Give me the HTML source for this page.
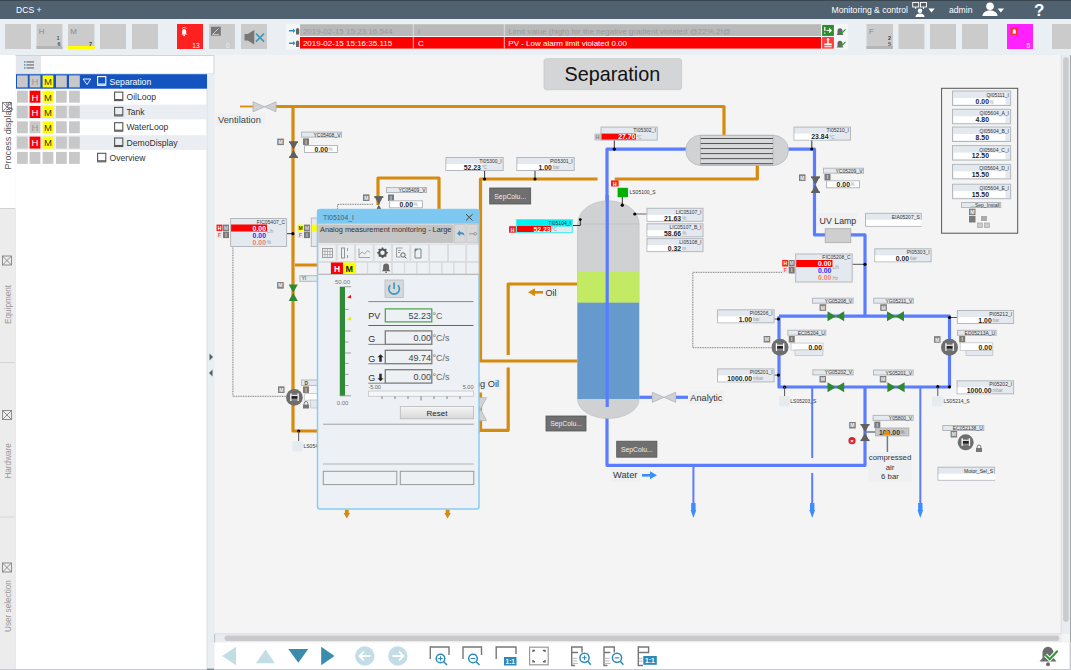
<!DOCTYPE html>
<html><head><meta charset="utf-8">
<style>
*{margin:0;padding:0;box-sizing:border-box}
html,body{width:1071px;height:670px;overflow:hidden;background:#f4f4f4;font-family:"Liberation Sans",sans-serif;position:relative}
svg{position:absolute;left:0;top:0}
svg text{font-family:"Liberation Sans",sans-serif}
</style></head><body>
<svg width="1071" height="670" viewBox="0 0 1071 670">
<!-- canvas bg -->
<rect x="214" y="55" width="857" height="615" fill="#f4f4f4"/>
<!-- canvas chrome -->
<rect x="213.6" y="55" width="1" height="580" fill="#dedede"/>
<rect x="544" y="58.7" width="137.6" height="31" rx="2.5" fill="#d4d5d6" stroke="#c4c6c8" stroke-width="0.8"/>
<text x="612.3" y="81.4" font-size="19.8" fill="#111" text-anchor="middle">Separation</text>
<!-- scrollbars -->
<rect x="1061" y="55" width="10" height="579" fill="#e8ecf0"/>
<line x1="1061.2" y1="55" x2="1061.2" y2="634" stroke="#d8dcdf" stroke-width="0.8"/>
<rect x="1063.1" y="57.2" width="5.6" height="564.7" rx="2.8" fill="#cbcbcb"/>
<rect x="214.5" y="633.5" width="847" height="9" fill="#e8ecf0"/>
<line x1="214.5" y1="633.7" x2="1061" y2="633.7" stroke="#d8dcdf" stroke-width="0.8"/>
<rect x="224.6" y="635.5" width="834.6" height="5.4" rx="2.7" fill="#c9c9c9"/>
<rect x="1070" y="55" width="1" height="615" fill="#a0a5aa"/>
<rect x="214.5" y="642.5" width="856" height="27.5" fill="#fff"/>


<!-- nav buttons -->
<polygon points="236,646.8 236,665.3 222.2,656" fill="#c3dde6"/>
<polygon points="255.9,663.3 275,663.3 265.5,649.5" fill="#c3dde6"/>
<polygon points="288.3,649 308.3,649 298.3,662.7" fill="#3a8cad"/>
<polygon points="321.2,646.8 321.2,665.3 334.5,656" fill="#3a8cad"/>
<circle cx="364.8" cy="656" r="9.7" fill="#c3dde6"/>
<path d="M359.5,656 h11 M364,651.5 l-4.5,4.5 l4.5,4.5" fill="none" stroke="#fff" stroke-width="1.8"/>
<circle cx="397.8" cy="656" r="9.7" fill="#c3dde6"/>
<path d="M392.5,656 h11 M399,651.5 l4.5,4.5 l-4.5,4.5" fill="none" stroke="#fff" stroke-width="1.8"/>
<g fill="none" stroke="#777" stroke-width="1.4">
<path d="M430.3,659 V647 H449 V655"/>
<path d="M463,659 V647 H481.5 V655"/>
<path d="M496.2,659 V647 H516 V654"/>
<rect x="529.6" y="647.2" width="18.6" height="17.6" stroke="#999" stroke-width="1.2"/>
<path d="M533,652 V650.5 H535 M543,650.5 H545 V652 M545,660 V661.8 H543 M535,661.8 H533 V660" stroke="#666"/>
<path d="M575,665.5 H571.7 V647 H582 V652.5 M571.7,652.5 H578"/>
<path d="M607.4,665.5 H604 V647 H614.3 V652.5 M604,652.5 H610.3"/>
<path d="M643,665.5 H638.3 V647 H648.6 V652.5 H638.3"/>
</g>
<g stroke="#bbb" stroke-width="1">
<path d="M572,658.3 h5 M572,661 h5 M572,663.5 h6"/>
<path d="M604.5,658.3 h5 M604.5,661 h5 M604.5,663.5 h6"/>
<path d="M638.8,658.3 h4 M638.8,661 h4"/>
</g>
<g fill="none" stroke="#2c89b8" stroke-width="1.5">
<circle cx="440.5" cy="658.5" r="4.3"/><line x1="443.7" y1="661.7" x2="447" y2="665"/>
<circle cx="473" cy="658.5" r="4.3"/><line x1="476.2" y1="661.7" x2="479.5" y2="665"/>
<circle cx="584.5" cy="657.8" r="4.6"/><line x1="587.8" y1="661.2" x2="590.8" y2="664.8"/>
<circle cx="617" cy="657.8" r="4.6"/><line x1="620.3" y1="661.2" x2="623.3" y2="664.8"/>
</g>
<g stroke="#2c89b8" stroke-width="1.1">
<path d="M438.2,658.5 h4.6 M440.5,656.2 v4.6"/><path d="M470.7,658.5 h4.6"/>
<path d="M582.2,657.8 h4.6 M584.5,655.5 v4.6"/><path d="M614.7,657.8 h4.6"/>
</g>
<rect x="504" y="657" width="12.5" height="8.5" fill="#2c89b8"/>
<text x="510.3" y="664" font-size="6.5" fill="#fff" text-anchor="middle" font-weight="bold">1:1</text>
<rect x="643.3" y="656" width="13.5" height="8.8" fill="#2c89b8"/>
<text x="650" y="663.3" font-size="6.8" fill="#fff" text-anchor="middle" font-weight="bold">1:1</text>
<!-- bell check -->
<path d="M1039.5,661.5 h17 l-3,-3.5 v-5 a5.5,6.2 0 0 0 -11,0 v5 z" fill="#6b6b6b"/>
<circle cx="1048" cy="664.2" r="2" fill="#6b6b6b"/>
<path d="M1045.5,655 l4.2,4.2 l8,-8.5" fill="none" stroke="#fff" stroke-width="4"/>
<path d="M1045.5,655 l4.2,4.2 l8,-8.5" fill="none" stroke="#2a9a2a" stroke-width="2"/>
<rect x="1069.6" y="642" width="1.4" height="28" fill="#c8ccd0"/>
<polyline points="240,106.5 253,106.5" fill="none" stroke="#d68a0e" stroke-width="1.8" stroke-linejoin="round" />
<polyline points="276,106.5 724,106.5 724,135" fill="none" stroke="#d68a0e" stroke-width="3.2" stroke-linejoin="round" />
<polyline points="293,106.5 293,431 480,431" fill="none" stroke="#d68a0e" stroke-width="3.2" stroke-linejoin="round" />
<polyline points="295,265 330,265" fill="none" stroke="#d68a0e" stroke-width="3.2" stroke-linejoin="round" />
<polyline points="378,205 378,178 439,178 439,215" fill="none" stroke="#d68a0e" stroke-width="3.2" stroke-linejoin="round" />
<polyline points="480.5,235 480.5,179 597.5,179" fill="none" stroke="#d68a0e" stroke-width="3.2" stroke-linejoin="round" />
<polyline points="614.8,179 757.3,179 757.3,165" fill="none" stroke="#d68a0e" stroke-width="3.2" stroke-linejoin="round" />
<polyline points="480.5,235 480.5,361 577.5,361" fill="none" stroke="#d68a0e" stroke-width="3.2" stroke-linejoin="round" />
<polyline points="577.5,284 508.2,284 508.2,355" fill="none" stroke="#d68a0e" stroke-width="3.2" stroke-linejoin="round" />
<polyline points="508.2,367.5 508.2,430.3 480.5,430.3 480.5,392.4" fill="none" stroke="#d68a0e" stroke-width="3.2" stroke-linejoin="round" />
<polygon points="474.5,397.7 486.5,397.7 480.5,409.2 486.5,420.6 474.5,420.6 480.5,409.2" fill="#d0d2d4" stroke="#b0b3b5" stroke-width="0.8"/>
<rect x="478" y="379" width="24" height="11" fill="#eef0f2" stroke="none" stroke-width="1" rx="0" />
<rect x="344.90000000000003" y="509.5" width="3.8" height="5" fill="#d68a0e" stroke="none" stroke-width="1" rx="0" />
<polygon points="343.6,513.0 350.0,513.0 346.8,518.5" fill="#d68a0e"/>
<rect x="445.70000000000005" y="509.5" width="3.8" height="5" fill="#d68a0e" stroke="none" stroke-width="1" rx="0" />
<polygon points="444.40000000000003,513.0 450.8,513.0 447.6,518.5" fill="#d68a0e"/>
<rect x="533" y="291" width="10" height="2.6" fill="#d68a0e" stroke="none" stroke-width="1" rx="0" />
<polygon points="528,292.3 535,288.3 535,296.3" fill="#d68a0e"/>
<polyline points="686,149.2 607,149.2 607,407" fill="none" stroke="#5a7dff" stroke-width="3.2" stroke-linejoin="round" />
<polyline points="607,418 607,465.3 865,465.3 865,387" fill="none" stroke="#5a7dff" stroke-width="3.2" stroke-linejoin="round" />
<polyline points="788,149.2 814.5,149.2 814.5,234.8 825,234.8" fill="none" stroke="#5a7dff" stroke-width="3.2" stroke-linejoin="round" />
<polyline points="851,234.8 865,234.8 865,316.2" fill="none" stroke="#5a7dff" stroke-width="3.2" stroke-linejoin="round" />
<polyline points="779,316.2 949.5,316.2 949.5,387 779,387 779,316.2" fill="none" stroke="#5a7dff" stroke-width="3.2" stroke-linejoin="round" />
<polyline points="639,397.3 652,397.3" fill="none" stroke="#5a7dff" stroke-width="3.2" stroke-linejoin="round" />
<polyline points="676,397.3 688,397.3" fill="none" stroke="#5a7dff" stroke-width="3.2" stroke-linejoin="round" />
<line x1="693.4" y1="465" x2="693.4" y2="505" stroke="#5a7dff" stroke-width="2" />
<line x1="812.2" y1="387" x2="812.2" y2="458" stroke="#5a7dff" stroke-width="2" />
<line x1="812.2" y1="473" x2="812.2" y2="505" stroke="#5a7dff" stroke-width="2" />
<line x1="920.3" y1="387" x2="920.3" y2="505" stroke="#5a7dff" stroke-width="2" />
<rect x="691.1999999999999" y="503" width="4.4" height="8" fill="#3d8cff" stroke="none" stroke-width="1" rx="0" />
<polygon points="690.6,510 696.1999999999999,510 693.4,518" fill="#3d8cff"/>
<rect x="810.0" y="503" width="4.4" height="8" fill="#3d8cff" stroke="none" stroke-width="1" rx="0" />
<polygon points="809.4000000000001,510 815.0,510 812.2,518" fill="#3d8cff"/>
<rect x="918.0999999999999" y="503" width="4.4" height="8" fill="#3d8cff" stroke="none" stroke-width="1" rx="0" />
<polygon points="917.5,510 923.0999999999999,510 920.3,518" fill="#3d8cff"/>
<rect x="642" y="474" width="10" height="2.6" fill="#3d8cff" stroke="none" stroke-width="1" rx="0" />
<polygon points="657,475.3 650,471.3 650,479.3" fill="#3d8cff"/>
<polyline points="232.9,246.5 232.9,396.3 286,396.3" fill="none" stroke="#7a7a7a" stroke-width="1" stroke-linejoin="round" stroke-dasharray="1,0.7"/>
<polyline points="373,204.3 337.5,204.3 337.5,215" fill="none" stroke="#7a7a7a" stroke-width="1" stroke-linejoin="round" stroke-dasharray="1,0.7"/>
<polyline points="782,272.3 692.8,272.3 692.8,347.7 771,347.7" fill="none" stroke="#7a7a7a" stroke-width="1" stroke-linejoin="round" stroke-dasharray="1,0.7"/>
<polyline points="600,348 771,348" fill="none" stroke="#888" stroke-width="0" stroke-linejoin="round" stroke-dasharray="1,0.7"/>
<polygon points="253,101.8 264.5,106.8 253,111.8" fill="#cfd2d4" stroke="#b0b3b5" stroke-width="0.8"/>
<polygon points="276,101.8 264.5,106.8 276,111.8" fill="#cfd2d4" stroke="#b0b3b5" stroke-width="0.8"/>
<rect x="215" y="113" width="50" height="13" fill="#eef0f2" stroke="none" stroke-width="1" rx="0" />
<text x="218" y="122.7" font-size="9.3" fill="#444" text-anchor="start" font-weight="normal" >Ventilation</text>
<polygon points="289.0,141.5 298.0,141.5 293.5,149.75 298.0,158 289.0,158 293.5,149.75" fill="#606060"/>
<rect x="289.0" y="141.5" width="9" height="1.5" fill="#606060" stroke="none" stroke-width="1" rx="0" />
<rect x="289.0" y="156.5" width="9" height="1.5" fill="#606060" stroke="none" stroke-width="1" rx="0" />
<rect x="277.8" y="139.1" width="5.5" height="5.5" fill="#8c8c8c" stroke="#7a7a7a" stroke-width="1" rx="0" />
<text x="280.55" y="143.9" font-size="5" fill="#f2f2f2" text-anchor="middle" font-weight="bold" >M</text>
<rect x="301.5" y="132.1" width="40" height="5" fill="#e3e9ef" stroke="#b4b8bc" stroke-width="1" rx="0" />
<text x="340.5" y="136.6" font-size="5" fill="#333" text-anchor="end" font-weight="normal" >YC05408_V</text>
<rect x="303" y="138.4" width="6" height="6.5" fill="#7a7a7a" stroke="none" stroke-width="1" rx="0" />
<text x="306.0" y="143.70000000000002" font-size="5" fill="#ddd" text-anchor="middle" font-weight="bold" >I</text>
<rect x="304.5" y="145.5" width="33" height="7" fill="#fff" stroke="#b4b8bc" stroke-width="1"/>
<text transform="translate(328,151.8) scale(0.86,1)" font-size="8" fill="#222" text-anchor="end" font-weight="bold" >0.00</text>
<text x="328.5" y="151" font-size="4.5" fill="#999" text-anchor="start" font-weight="normal" >%</text>
<polygon points="374.3,196.3 383.3,196.3 378.8,204.65 383.3,213 374.3,213 378.8,204.65" fill="#606060"/>
<rect x="374.3" y="196.3" width="9" height="1.5" fill="#606060" stroke="none" stroke-width="1" rx="0" />
<rect x="374.3" y="211.5" width="9" height="1.5" fill="#606060" stroke="none" stroke-width="1" rx="0" />
<rect x="363.5" y="194.9" width="5.5" height="5.5" fill="#8c8c8c" stroke="#7a7a7a" stroke-width="1" rx="0" />
<text x="366.25" y="199.70000000000002" font-size="5" fill="#f2f2f2" text-anchor="middle" font-weight="bold" >M</text>
<rect x="386.5" y="187.5" width="40" height="5" fill="#e3e9ef" stroke="#b4b8bc" stroke-width="1" rx="0" />
<text x="425.5" y="192" font-size="5" fill="#333" text-anchor="end" font-weight="normal" >YC05409_V</text>
<rect x="388" y="194.5" width="6" height="6.5" fill="#7a7a7a" stroke="none" stroke-width="1" rx="0" />
<text x="391.0" y="199.8" font-size="5" fill="#ddd" text-anchor="middle" font-weight="bold" >I</text>
<rect x="389.5" y="200.8" width="33" height="7" fill="#fff" stroke="#b4b8bc" stroke-width="1"/>
<text transform="translate(413,207) scale(0.86,1)" font-size="8" fill="#222" text-anchor="end" font-weight="bold" >0.00</text>
<text x="413.5" y="206.2" font-size="4.5" fill="#999" text-anchor="start" font-weight="normal" >%</text>
<rect x="445.9" y="157.5" width="57.3" height="13" fill="#e3e9ef" stroke="#b4b8bc" stroke-width="1" rx="0" />
<rect x="446.4" y="164.0" width="34.98" height="6.0" fill="#fff" stroke="none" stroke-width="1" rx="0" />
<text x="501.7" y="162.8" font-size="5" fill="#333" text-anchor="end" font-weight="normal" >TI05300_I</text>
<text transform="translate(480.88,169.7) scale(0.86,1)" font-size="8" fill="#222" text-anchor="end" font-weight="bold" >52.23</text>
<text x="481.88" y="169" font-size="4.5" fill="#999" text-anchor="start" font-weight="normal" >°C</text>
<line x1="484.6" y1="171" x2="484.6" y2="179" stroke="#333" stroke-width="1" />
<circle cx="484.6" cy="179" r="1.6" fill="#000"/>
<rect x="516.9" y="157.5" width="57.3" height="13" fill="#e3e9ef" stroke="#b4b8bc" stroke-width="1" rx="0" />
<rect x="517.4" y="164.0" width="34.98" height="6.0" fill="#fff" stroke="none" stroke-width="1" rx="0" />
<text x="572.6999999999999" y="162.8" font-size="5" fill="#333" text-anchor="end" font-weight="normal" >PI05301_I</text>
<text transform="translate(551.88,169.7) scale(0.86,1)" font-size="8" fill="#222" text-anchor="end" font-weight="bold" >1.00</text>
<text x="552.88" y="169" font-size="4.5" fill="#999" text-anchor="start" font-weight="normal" >bar</text>
<line x1="535" y1="171" x2="535" y2="179" stroke="#333" stroke-width="1" />
<circle cx="535" cy="179" r="1.6" fill="#000"/>
<rect x="489.7" y="188" width="41" height="16" fill="#6f6f6f" stroke="#555" stroke-width="0.8" rx="0" />
<text x="510.2" y="198.5" font-size="6.8" fill="#eee" text-anchor="middle" font-weight="normal" >SepColu...</text>
<rect x="594.3" y="133.5" width="6.7" height="7" fill="#c8c8c8" stroke="none" stroke-width="1" rx="0" />
<text x="597.6" y="139" font-size="5" fill="#888" text-anchor="middle" font-weight="bold" >H</text>
<rect x="601.0" y="127.1" width="56.3" height="13" fill="#e3e9ef" stroke="#b4b8bc" stroke-width="1" rx="0" />
<rect x="601.5" y="133.6" width="34.379999999999995" height="6.0" fill="#ff0000" stroke="none" stroke-width="1" rx="0" />
<text x="655.8" y="132.4" font-size="5" fill="#333" text-anchor="end" font-weight="normal" >TI05302_I</text>
<text transform="translate(635.38,139.29999999999998) scale(0.86,1)" font-size="8" fill="#fff" text-anchor="end" font-weight="bold" >27.70</text>
<text x="636.38" y="138.6" font-size="4.5" fill="#999" text-anchor="start" font-weight="normal" >°C</text>
<line x1="614.3" y1="140.6" x2="614.3" y2="149" stroke="#333" stroke-width="1" />
<circle cx="614.3" cy="149.2" r="1.6" fill="#000"/>
<rect x="509" y="226.2" width="7" height="6.5" fill="#ff1a1a" stroke="none" stroke-width="1" rx="0" />
<text x="512.5" y="231.5" font-size="5" fill="#fff" text-anchor="middle" font-weight="bold" >H</text>
<rect x="516.4" y="219.5" width="56" height="13" fill="#e3e9ef" stroke="#b4b8bc" stroke-width="1" rx="0" />
<rect x="516.4" y="219.5" width="56" height="7.0" fill="#00f0f0" stroke="none" stroke-width="1" rx="0" />
<rect x="516.9" y="226.0" width="34.199999999999996" height="6.0" fill="#ff0000" stroke="none" stroke-width="1" rx="0" />
<text x="570.9" y="224.8" font-size="5" fill="#333" text-anchor="end" font-weight="normal" >TI05104_I</text>
<text transform="translate(550.6,231.7) scale(0.86,1)" font-size="8" fill="#fff" text-anchor="end" font-weight="bold" >52.23</text>
<text x="551.6" y="231" font-size="4.5" fill="#999" text-anchor="start" font-weight="normal" >°C</text>
<rect x="516.4" y="219.5" width="56" height="13" fill="none" stroke="#5ee" stroke-width="1"/>
<path d="M700.7,135.2 L773,135.2 A15.5,15.1 0 0 1 773,165.4 L700.7,165.4 A15,15.1 0 0 1 700.7,135.2 Z" fill="#d0d2d3" stroke="#b8babb" stroke-width="0.8"/>
<rect x="700.7" y="135.5" width="72.3" height="29.6" fill="#d7d9da" stroke="#aaa" stroke-width="0.6" rx="0" />
<line x1="700.7" y1="138.5" x2="773" y2="138.5" stroke="#444" stroke-width="0.9" />
<line x1="700.7" y1="143.53" x2="773" y2="143.53" stroke="#444" stroke-width="0.9" />
<line x1="700.7" y1="148.56" x2="773" y2="148.56" stroke="#444" stroke-width="0.9" />
<line x1="700.7" y1="153.59" x2="773" y2="153.59" stroke="#444" stroke-width="0.9" />
<line x1="700.7" y1="158.62" x2="773" y2="158.62" stroke="#444" stroke-width="0.9" />
<line x1="700.7" y1="163.65" x2="773" y2="163.65" stroke="#444" stroke-width="0.9" />
<rect x="794.0" y="127.1" width="56.5" height="13" fill="#e3e9ef" stroke="#b4b8bc" stroke-width="1" rx="0" />
<rect x="794.5" y="133.6" width="34.5" height="6.0" fill="#fff" stroke="none" stroke-width="1" rx="0" />
<text x="849.0" y="132.4" font-size="5" fill="#333" text-anchor="end" font-weight="normal" >TI05210_I</text>
<text transform="translate(828.5,139.29999999999998) scale(0.86,1)" font-size="8" fill="#222" text-anchor="end" font-weight="bold" >23.84</text>
<text x="829.5" y="138.6" font-size="4.5" fill="#999" text-anchor="start" font-weight="normal" >°C</text>
<line x1="811.8" y1="140.6" x2="811.8" y2="148" stroke="#333" stroke-width="1" />
<circle cx="811.8" cy="149" r="1.6" fill="#000"/>
<polygon points="811.0,176.6 820.0,176.6 815.5,184.8 820.0,193 811.0,193 815.5,184.8" fill="#606060"/>
<rect x="811.0" y="176.6" width="9" height="1.5" fill="#606060" stroke="none" stroke-width="1" rx="0" />
<rect x="811.0" y="191.5" width="9" height="1.5" fill="#606060" stroke="none" stroke-width="1" rx="0" />
<rect x="799.5" y="174.9" width="5.5" height="5.5" fill="#8c8c8c" stroke="#7a7a7a" stroke-width="1" rx="0" />
<text x="802.25" y="179.70000000000002" font-size="5" fill="#f2f2f2" text-anchor="middle" font-weight="bold" >M</text>
<rect x="823.5" y="168.2" width="40" height="5" fill="#e3e9ef" stroke="#b4b8bc" stroke-width="1" rx="0" />
<text x="862.5" y="172.7" font-size="5" fill="#333" text-anchor="end" font-weight="normal" >YC05209_V</text>
<rect x="824.5" y="174" width="6" height="6.5" fill="#7a7a7a" stroke="none" stroke-width="1" rx="0" />
<text x="827.5" y="179.3" font-size="5" fill="#ddd" text-anchor="middle" font-weight="bold" >I</text>
<rect x="826.5" y="180.8" width="33" height="7" fill="#fff" stroke="#b4b8bc" stroke-width="1"/>
<text transform="translate(850,187) scale(0.86,1)" font-size="8" fill="#222" text-anchor="end" font-weight="bold" >0.00</text>
<text x="850.5" y="186.2" font-size="4.5" fill="#999" text-anchor="start" font-weight="normal" >%</text>
<path d="M577.5,224 A30.8,23.2 0 0 1 639.1,224 L639.1,399 A30.8,19.5 0 0 1 577.5,399 Z" fill="#d0d1d2" stroke="#bbb" stroke-width="0.6"/>
<rect x="577.5" y="272" width="61.6" height="30.7" fill="#c2ea62" stroke="none" stroke-width="1" rx="0" />
<rect x="577.5" y="302.7" width="61.6" height="96.3" fill="#6699cc" stroke="none" stroke-width="1" rx="0" />
<line x1="577.5" y1="224" x2="639.1" y2="224" stroke="#bbb" stroke-width="0.6" />
<line x1="607.2" y1="195" x2="607.2" y2="407" stroke="#5a7dff" stroke-width="3.2" />
<polyline points="573,225.5 580.3,225.5 580.3,219.6" fill="none" stroke="#333" stroke-width="1" stroke-linejoin="round" />
<circle cx="580.3" cy="219.6" r="1.4" fill="#000"/>
<rect x="611" y="180.4" width="7.6" height="6.1" fill="#ff1a1a" stroke="none" stroke-width="1" rx="0" />
<text x="614.8" y="185.6" font-size="5" fill="#fff" text-anchor="middle" font-weight="bold" >H</text>
<rect x="617.6" y="187.8" width="10.4" height="9.4" fill="#00b000" stroke="none" stroke-width="1" rx="0" />
<text x="629.5" y="193.5" font-size="5" fill="#333" text-anchor="start" font-weight="normal" >LS05100_S</text>
<line x1="622.3" y1="197" x2="622.3" y2="205" stroke="#333" stroke-width="1" />
<circle cx="622.3" cy="205.2" r="1.6" fill="#000"/>
<polyline points="634.8,214 646.6,214" fill="none" stroke="#666" stroke-width="1" stroke-linejoin="round" />
<circle cx="634.8" cy="214" r="1.6" fill="#000"/>
<rect x="647.0" y="208.3" width="56" height="13" fill="#e3e9ef" stroke="#b4b8bc" stroke-width="1" rx="0" />
<rect x="647.5" y="214.8" width="34.199999999999996" height="6.0" fill="#fff" stroke="none" stroke-width="1" rx="0" />
<text x="701.5" y="213.60000000000002" font-size="5" fill="#333" text-anchor="end" font-weight="normal" >LIC05107_I</text>
<text transform="translate(681.2,220.5) scale(0.86,1)" font-size="8" fill="#222" text-anchor="end" font-weight="bold" >21.63</text>
<text x="682.2" y="219.8" font-size="4.5" fill="#999" text-anchor="start" font-weight="normal" >%</text>
<rect x="647.0" y="223.8" width="56" height="13" fill="#e3e9ef" stroke="#b4b8bc" stroke-width="1" rx="0" />
<rect x="647.5" y="230.3" width="34.199999999999996" height="6.0" fill="#fff" stroke="none" stroke-width="1" rx="0" />
<text x="701.5" y="229.10000000000002" font-size="5" fill="#333" text-anchor="end" font-weight="normal" >LIC05107_B_I</text>
<text transform="translate(681.2,236.0) scale(0.86,1)" font-size="8" fill="#222" text-anchor="end" font-weight="bold" >58.66</text>
<text x="682.2" y="235.3" font-size="4.5" fill="#999" text-anchor="start" font-weight="normal" >%</text>
<rect x="647.0" y="238.6" width="56" height="13" fill="#e3e9ef" stroke="#b4b8bc" stroke-width="1" rx="0" />
<rect x="647.5" y="245.1" width="34.199999999999996" height="6.0" fill="#fff" stroke="none" stroke-width="1" rx="0" />
<text x="701.5" y="243.9" font-size="5" fill="#333" text-anchor="end" font-weight="normal" >LI05108_I</text>
<text transform="translate(681.2,250.79999999999998) scale(0.86,1)" font-size="8" fill="#222" text-anchor="end" font-weight="bold" >0.32</text>
<text x="682.2" y="250.1" font-size="4.5" fill="#999" text-anchor="start" font-weight="normal" >m</text>
<rect x="546" y="416" width="40" height="15" fill="#6f6f6f" stroke="#555" stroke-width="0.8" rx="0" />
<text x="566.0" y="426.0" font-size="6.8" fill="#eee" text-anchor="middle" font-weight="normal" >SepColu...</text>
<rect x="544" y="287" width="15" height="12" fill="#eef0f2" stroke="none" stroke-width="1" rx="0" />
<text x="545.4" y="296" font-size="9" fill="#333" text-anchor="start" font-weight="normal" >Oil</text>
<text x="499.2" y="386.9" font-size="9.3" fill="#333" text-anchor="end" font-weight="normal" >ng Oil</text>
<polygon points="652.3,392.3 664.0,397.3 652.3,402.3" fill="#cfd2d4" stroke="#b0b3b5" stroke-width="0.8"/>
<polygon points="675.7,392.3 664.0,397.3 675.7,402.3" fill="#cfd2d4" stroke="#b0b3b5" stroke-width="0.8"/>
<rect x="688" y="391" width="36" height="13" fill="#eef0f2" stroke="none" stroke-width="1" rx="0" />
<text x="690.3" y="401" font-size="9.2" fill="#333" text-anchor="start" font-weight="normal" >Analytic</text>
<rect x="616.7" y="441.2" width="40.2" height="16" fill="#6f6f6f" stroke="#555" stroke-width="0.8" rx="0" />
<text x="636.8000000000001" y="451.7" font-size="6.8" fill="#eee" text-anchor="middle" font-weight="normal" >SepColu...</text>
<rect x="611" y="469" width="29" height="13" fill="#eef0f2" stroke="none" stroke-width="1" rx="0" />
<text x="613" y="478.2" font-size="9.3" fill="#333" text-anchor="start" font-weight="normal" >Water</text>
<rect x="817" y="213" width="40" height="13" fill="#eef0f2" stroke="none" stroke-width="1" rx="0" />
<text x="819.6" y="224" font-size="8.8" fill="#333" text-anchor="start" font-weight="normal" >UV Lamp</text>
<rect x="825.2" y="228.7" width="25.6" height="14" fill="#cfcfcf" stroke="#aaa" stroke-width="0.8" rx="0" />
<rect x="865.5" y="213.3" width="55.8" height="13" fill="#e3e9ef" stroke="#b4b8bc" stroke-width="1" rx="0" />
<rect x="866" y="219.8" width="55.8" height="6.0" fill="#fff" stroke="none" stroke-width="1" rx="0" />
<text x="919.8" y="218.60000000000002" font-size="5" fill="#333" text-anchor="end" font-weight="normal" >EIA05207_S</text>
<rect x="874.8" y="248.8" width="56.3" height="13" fill="#e3e9ef" stroke="#b4b8bc" stroke-width="1" rx="0" />
<rect x="875.3" y="255.3" width="34.379999999999995" height="6.0" fill="#fff" stroke="none" stroke-width="1" rx="0" />
<text x="929.5999999999999" y="254.10000000000002" font-size="5" fill="#333" text-anchor="end" font-weight="normal" >PI05303_I</text>
<text transform="translate(909.18,261.0) scale(0.86,1)" font-size="8" fill="#222" text-anchor="end" font-weight="bold" >0.00</text>
<text x="910.18" y="260.3" font-size="4.5" fill="#999" text-anchor="start" font-weight="normal" >bar</text>
<rect x="782.2" y="260" width="6" height="6.5" fill="#ff1a1a" stroke="none" stroke-width="1" rx="0" />
<text x="785.2" y="265.3" font-size="5" fill="#fff" text-anchor="middle" font-weight="bold" >H</text>
<rect x="788.7" y="260" width="6" height="6.5" fill="#7a7a7a" stroke="none" stroke-width="1" rx="0" />
<text x="791.7" y="265.3" font-size="5" fill="#ddd" text-anchor="middle" font-weight="bold" >M</text>
<rect x="782.2" y="267" width="6" height="6.5" fill="#e8e8e8" stroke="none" stroke-width="1" rx="0" />
<text x="785.2" y="272.3" font-size="5" fill="#ff5050" text-anchor="middle" font-weight="bold" >F</text>
<rect x="788.7" y="267" width="6" height="6.5" fill="#7a7a7a" stroke="none" stroke-width="1" rx="0" />
<text x="791.7" y="272.3" font-size="5" fill="#ddd" text-anchor="middle" font-weight="bold" >I</text>
<rect x="795.7" y="254.0" width="56.5" height="28" fill="#e3e9ef" stroke="#b4b8bc" stroke-width="1" rx="0" />
<text x="850.7" y="259.3" font-size="5" fill="#333" text-anchor="end" font-weight="normal" >FIC05208_C</text>
<rect x="796.2" y="260.0" width="36.225" height="7" fill="#ff0000" stroke="none" stroke-width="1" rx="0" />
<text transform="translate(831.4250000000001,266.0) scale(0.86,1)" font-size="8" fill="#fff" text-anchor="end" font-weight="bold" >0.00</text>
<text transform="translate(831.4250000000001,273.0) scale(0.86,1)" font-size="8" fill="#2a2aff" text-anchor="end" font-weight="bold" >0.00</text>
<text transform="translate(831.4250000000001,280.0) scale(0.86,1)" font-size="8" fill="#f08070" text-anchor="end" font-weight="bold" >0.00</text>
<text x="832.4250000000001" y="268.5" font-size="4.5" fill="#999" text-anchor="start" font-weight="normal" >L/h</text>
<text x="832.4250000000001" y="279.5" font-size="4.5" fill="#999" text-anchor="start" font-weight="normal" >Hz</text>
<line x1="852.7" y1="264.3" x2="865" y2="264.3" stroke="#555" stroke-width="1" />
<circle cx="865" cy="264.3" r="1.6" fill="#000"/>
<rect x="812.5" y="298.2" width="40.6" height="5" fill="#e3e9ef" stroke="#b4b8bc" stroke-width="1" rx="0" />
<text x="852.1" y="302.7" font-size="5" fill="#333" text-anchor="end" font-weight="normal" >YG05208_V</text>
<rect x="820.1" y="304.8" width="5.5" height="5.5" fill="#8c8c8c" stroke="#7a7a7a" stroke-width="1" rx="0" />
<text x="822.85" y="309.6" font-size="5" fill="#f2f2f2" text-anchor="middle" font-weight="bold" >M</text>
<polygon points="827.5,311.2 835.85,316.2 827.5,321.2" fill="#2f8a2f"/>
<polygon points="844.2,311.2 835.85,316.2 844.2,321.2" fill="#2f8a2f"/>
<rect x="873.7" y="298.2" width="39.7" height="5" fill="#e3e9ef" stroke="#b4b8bc" stroke-width="1" rx="0" />
<text x="912.4000000000001" y="302.7" font-size="5" fill="#333" text-anchor="end" font-weight="normal" >YG05211_V</text>
<rect x="880.8" y="304.8" width="5.5" height="5.5" fill="#8c8c8c" stroke="#7a7a7a" stroke-width="1" rx="0" />
<text x="883.55" y="309.6" font-size="5" fill="#f2f2f2" text-anchor="middle" font-weight="bold" >M</text>
<polygon points="887,311.2 895.5,316.2 887,321.2" fill="#2f8a2f"/>
<polygon points="904,311.2 895.5,316.2 904,321.2" fill="#2f8a2f"/>
<rect x="812.9" y="369.9" width="40.2" height="5" fill="#e3e9ef" stroke="#b4b8bc" stroke-width="1" rx="0" />
<text x="852.1" y="374.4" font-size="5" fill="#333" text-anchor="end" font-weight="normal" >YG05202_V</text>
<rect x="820.0" y="376.5" width="5.5" height="5.5" fill="#8c8c8c" stroke="#7a7a7a" stroke-width="1" rx="0" />
<text x="822.75" y="381.3" font-size="5" fill="#f2f2f2" text-anchor="middle" font-weight="bold" >M</text>
<polygon points="827.5,382.2 835.85,387.2 827.5,392.2" fill="#2f8a2f"/>
<polygon points="844.2,382.2 835.85,387.2 844.2,392.2" fill="#2f8a2f"/>
<rect x="873.5" y="370.0" width="39.7" height="5" fill="#e3e9ef" stroke="#b4b8bc" stroke-width="1" rx="0" />
<text x="912.2" y="374.5" font-size="5" fill="#333" text-anchor="end" font-weight="normal" >YS05201_V</text>
<rect x="880.3" y="376.5" width="5.5" height="5.5" fill="#8c8c8c" stroke="#7a7a7a" stroke-width="1" rx="0" />
<text x="883.05" y="381.3" font-size="5" fill="#f2f2f2" text-anchor="middle" font-weight="bold" >M</text>
<polygon points="887.4,382.2 896.0,387.2 887.4,392.2" fill="#2f8a2f"/>
<polygon points="904.6,382.2 896.0,387.2 904.6,392.2" fill="#2f8a2f"/>
<rect x="717.6" y="309.8" width="56.5" height="13" fill="#e3e9ef" stroke="#b4b8bc" stroke-width="1" rx="0" />
<rect x="718.1" y="316.3" width="34.5" height="6.0" fill="#fff" stroke="none" stroke-width="1" rx="0" />
<text x="772.6" y="315.1" font-size="5" fill="#333" text-anchor="end" font-weight="normal" >PI05206_I</text>
<text transform="translate(752.1,322.0) scale(0.86,1)" font-size="8" fill="#222" text-anchor="end" font-weight="bold" >1.00</text>
<text x="753.1" y="321.3" font-size="4.5" fill="#999" text-anchor="start" font-weight="normal" >bar</text>
<line x1="774.6" y1="319" x2="778.4" y2="319" stroke="#555" stroke-width="1" />
<circle cx="778.4" cy="319" r="1.6" fill="#000"/>
<rect x="717.6" y="368.9" width="56.5" height="13" fill="#e3e9ef" stroke="#b4b8bc" stroke-width="1" rx="0" />
<rect x="718.1" y="375.4" width="34.5" height="6.0" fill="#fff" stroke="none" stroke-width="1" rx="0" />
<text x="772.6" y="374.2" font-size="5" fill="#333" text-anchor="end" font-weight="normal" >PI05201_I</text>
<text transform="translate(752.1,381.09999999999997) scale(0.86,1)" font-size="8" fill="#222" text-anchor="end" font-weight="bold" >1000.00</text>
<text x="753.1" y="380.4" font-size="4.5" fill="#999" text-anchor="start" font-weight="normal" >mbar</text>
<line x1="774.6" y1="375.1" x2="778.4" y2="375.1" stroke="#555" stroke-width="1" />
<circle cx="778.4" cy="375.1" r="1.6" fill="#000"/>
<circle cx="780" cy="347.3" r="8.5" fill="#6e6e6e"/>
<rect x="775.8" y="343.3" width="1.4" height="7.6" fill="#fff" stroke="none" stroke-width="1" rx="0" />
<rect x="783" y="343.3" width="1.4" height="7.6" fill="#fff" stroke="none" stroke-width="1" rx="0" />
<rect x="777.2" y="344.7" width="5.8" height="1.1" fill="#f4f4f4" stroke="none" stroke-width="1" rx="0" />
<rect x="777.2" y="346.1" width="5.8" height="2.6" fill="#1e1e1e" stroke="none" stroke-width="1" rx="0" />
<rect x="777.2" y="348.7" width="5.8" height="1.8" fill="#8a8a8a" stroke="none" stroke-width="1" rx="0" />
<rect x="764.2" y="336.5" width="5.5" height="5.5" fill="#8c8c8c" stroke="#7a7a7a" stroke-width="1" rx="0" />
<text x="766.95" y="341.3" font-size="5" fill="#f2f2f2" text-anchor="middle" font-weight="bold" >M</text>
<rect x="787.9" y="330.2" width="38" height="5" fill="#e3e9ef" stroke="#b4b8bc" stroke-width="1" rx="0" />
<text x="824.9" y="334.7" font-size="5" fill="#333" text-anchor="end" font-weight="normal" >EC05204_U</text>
<rect x="788.8" y="336" width="6" height="6.5" fill="#7a7a7a" stroke="none" stroke-width="1" rx="0" />
<text x="791.8" y="341.3" font-size="5" fill="#ddd" text-anchor="middle" font-weight="bold" >I</text>
<rect x="791" y="343.1" width="32" height="7" fill="#fff" stroke="#c0c4c8" stroke-width="0.8" rx="0" />
<rect x="795" y="350" width="27.9" height="5.5" fill="#e3e9ef" stroke="#c0c4c8" stroke-width="0.8" rx="0" />
<text transform="translate(822,349.6) scale(0.86,1)" font-size="8" fill="#222" text-anchor="end" font-weight="bold" >0.00</text>
<circle cx="784.6" cy="387.2" r="1.6" fill="#000"/>
<line x1="784.6" y1="387" x2="784.6" y2="396" stroke="#555" stroke-width="1" />
<rect x="779" y="396" width="10.9" height="10.4" fill="#e6ebf0" stroke="none" stroke-width="1" rx="0" />
<text x="790.3" y="403" font-size="5" fill="#333" text-anchor="start" font-weight="normal" >LS05203_S</text>
<polygon points="860.5,424 869.5,424 865,432.55 869.5,441.1 860.5,441.1 865,432.55" fill="#606060"/>
<rect x="860.5" y="424" width="9" height="1.5" fill="#606060" stroke="none" stroke-width="1" rx="0" />
<rect x="860.5" y="439.6" width="9" height="1.5" fill="#606060" stroke="none" stroke-width="1" rx="0" />
<rect x="849.7" y="422.5" width="5.5" height="5.5" fill="#8c8c8c" stroke="#7a7a7a" stroke-width="1" rx="0" />
<text x="852.45" y="427.3" font-size="5" fill="#f2f2f2" text-anchor="middle" font-weight="bold" >M</text>
<circle cx="852" cy="440.7" r="3.6" fill="#e02020"/>
<text x="852" y="442.5" font-size="6" fill="#fff" text-anchor="middle" font-weight="bold" >×</text>
<rect x="873.1" y="415.4" width="40.1" height="5" fill="#e3e9ef" stroke="#b4b8bc" stroke-width="1" rx="0" />
<text x="912.2" y="419.9" font-size="5" fill="#333" text-anchor="end" font-weight="normal" >Y05800_V</text>
<rect x="874.3" y="421.6" width="6" height="6.5" fill="#7a7a7a" stroke="none" stroke-width="1" rx="0" />
<text x="877.3" y="426.90000000000003" font-size="5" fill="#ddd" text-anchor="middle" font-weight="bold" >I</text>
<line x1="865" y1="432" x2="875.5" y2="432" stroke="#6c7c8c" stroke-width="1.5" />
<rect x="875.5" y="428" width="33.4" height="7.9" fill="#c8c8c8" stroke="#aaa" stroke-width="0.8" rx="0" />
<text transform="translate(900,434.5) scale(0.86,1)" font-size="8" fill="#333" text-anchor="end" font-weight="bold" >100.00</text>
<text x="900.5" y="434" font-size="4.5" fill="#777" text-anchor="start" font-weight="normal" >%</text>
<polygon points="887,428.8 883.5,435 890.5,435" fill="#f08a00"/>
<line x1="887.4" y1="436" x2="887.4" y2="453" stroke="#6c7c8c" stroke-width="1.5" />
<rect x="868" y="452" width="44" height="30" fill="#eef0f2" stroke="none" stroke-width="1" rx="0" />
<text x="890" y="460.2" font-size="7.8" fill="#333" text-anchor="middle" font-weight="normal" >compressed</text>
<text x="890" y="469.8" font-size="7.8" fill="#333" text-anchor="middle" font-weight="normal" >air</text>
<text x="890" y="479.3" font-size="7.8" fill="#333" text-anchor="middle" font-weight="normal" >6 bar</text>
<rect x="957.4" y="310.5" width="56.2" height="13" fill="#e3e9ef" stroke="#b4b8bc" stroke-width="1" rx="0" />
<rect x="957.9" y="317.0" width="34.32" height="6.0" fill="#fff" stroke="none" stroke-width="1" rx="0" />
<text x="1012.1" y="315.8" font-size="5" fill="#333" text-anchor="end" font-weight="normal" >PI05212_I</text>
<text transform="translate(991.72,322.7) scale(0.86,1)" font-size="8" fill="#222" text-anchor="end" font-weight="bold" >1.00</text>
<text x="992.72" y="322" font-size="4.5" fill="#999" text-anchor="start" font-weight="normal" >bar</text>
<line x1="949.5" y1="317.5" x2="956.9" y2="317.5" stroke="#555" stroke-width="1" />
<circle cx="949.5" cy="317.5" r="1.6" fill="#000"/>
<circle cx="949.5" cy="347.3" r="8.5" fill="#6e6e6e"/>
<rect x="945.3" y="343.3" width="1.4" height="7.6" fill="#fff" stroke="none" stroke-width="1" rx="0" />
<rect x="952.5" y="343.3" width="1.4" height="7.6" fill="#fff" stroke="none" stroke-width="1" rx="0" />
<rect x="946.7" y="344.7" width="5.8" height="1.1" fill="#f4f4f4" stroke="none" stroke-width="1" rx="0" />
<rect x="946.7" y="346.1" width="5.8" height="2.6" fill="#1e1e1e" stroke="none" stroke-width="1" rx="0" />
<rect x="946.7" y="348.7" width="5.8" height="1.8" fill="#8a8a8a" stroke="none" stroke-width="1" rx="0" />
<rect x="934.5" y="336.7" width="5.5" height="5.5" fill="#8c8c8c" stroke="#7a7a7a" stroke-width="1" rx="0" />
<text x="937.25" y="341.5" font-size="5" fill="#f2f2f2" text-anchor="middle" font-weight="bold" >M</text>
<rect x="957.5" y="330.3" width="38.7" height="5" fill="#e3e9ef" stroke="#b4b8bc" stroke-width="1" rx="0" />
<text x="995.2" y="334.8" font-size="5" fill="#333" text-anchor="end" font-weight="normal" >ED05213A_U</text>
<rect x="959.2" y="336" width="6" height="6.5" fill="#7a7a7a" stroke="none" stroke-width="1" rx="0" />
<text x="962.2" y="341.3" font-size="5" fill="#ddd" text-anchor="middle" font-weight="bold" >I</text>
<rect x="960.2" y="342.8" width="32.6" height="7.8" fill="#fff" stroke="#c0c4c8" stroke-width="0.8" rx="0" />
<rect x="966" y="350.6" width="26.8" height="4.8" fill="#e3e9ef" stroke="#c0c4c8" stroke-width="0.8" rx="0" />
<text transform="translate(992,349.8) scale(0.86,1)" font-size="8" fill="#222" text-anchor="end" font-weight="bold" >0.00</text>
<rect x="957.1" y="380.8" width="56.5" height="13" fill="#e3e9ef" stroke="#b4b8bc" stroke-width="1" rx="0" />
<rect x="957.6" y="387.3" width="34.5" height="6.0" fill="#fff" stroke="none" stroke-width="1" rx="0" />
<text x="1012.1" y="386.1" font-size="5" fill="#333" text-anchor="end" font-weight="normal" >PI05202_I</text>
<text transform="translate(991.6,393.0) scale(0.86,1)" font-size="8" fill="#222" text-anchor="end" font-weight="bold" >1000.00</text>
<text x="992.6" y="392.3" font-size="4.5" fill="#999" text-anchor="start" font-weight="normal" >mbar</text>
<circle cx="949.5" cy="386.8" r="1.6" fill="#000"/>
<circle cx="937.8" cy="386.7" r="1.6" fill="#000"/>
<line x1="937.8" y1="387" x2="937.8" y2="396" stroke="#555" stroke-width="1" />
<rect x="932" y="396.4" width="10.7" height="10.1" fill="#e6ebf0" stroke="none" stroke-width="1" rx="0" />
<text x="943.5" y="403" font-size="5" fill="#333" text-anchor="start" font-weight="normal" >LS05214_S</text>
<rect x="942.8" y="425.5" width="41" height="5" fill="#e3e9ef" stroke="#b4b8bc" stroke-width="1" rx="0" />
<text x="982.8" y="430" font-size="5" fill="#333" text-anchor="end" font-weight="normal" >EC052138_U</text>
<rect x="951.1" y="431.5" width="5.5" height="5.5" fill="#8c8c8c" stroke="#7a7a7a" stroke-width="1" rx="0" />
<text x="953.85" y="436.3" font-size="5" fill="#f2f2f2" text-anchor="middle" font-weight="bold" >M</text>
<circle cx="965.7" cy="442.3" r="8" fill="#6e6e6e"/>
<rect x="961.5" y="438.3" width="1.4" height="7.6" fill="#fff" stroke="none" stroke-width="1" rx="0" />
<rect x="968.7" y="438.3" width="1.4" height="7.6" fill="#fff" stroke="none" stroke-width="1" rx="0" />
<rect x="962.9000000000001" y="439.7" width="5.8" height="1.1" fill="#f4f4f4" stroke="none" stroke-width="1" rx="0" />
<rect x="962.9000000000001" y="441.1" width="5.8" height="2.6" fill="#1e1e1e" stroke="none" stroke-width="1" rx="0" />
<rect x="962.9000000000001" y="443.7" width="5.8" height="1.8" fill="#8a8a8a" stroke="none" stroke-width="1" rx="0" />
<path d="M977.2,448 v-1.2 a1.8,1.8 0 0 1 3.6,0 v1.2" fill="none" stroke="#777" stroke-width="1"/>
<rect x="976" y="448" width="6" height="4" fill="#777" stroke="none" stroke-width="1" rx="0" />
<rect x="938.0" y="467.2" width="56.5" height="13" fill="#e3e9ef" stroke="#b4b8bc" stroke-width="1" rx="0" />
<rect x="938.5" y="473.7" width="56.5" height="6.0" fill="#fff" stroke="none" stroke-width="1" rx="0" />
<text x="993.0" y="472.5" font-size="5" fill="#333" text-anchor="end" font-weight="normal" >Motor_Sel_S</text>
<rect x="941.6" y="88.3" width="76.1" height="144.9" fill="none" stroke="#555" stroke-width="1" rx="0" />
<rect x="952.5" y="91" width="58.1" height="14.5" fill="#e3e9ef" stroke="#b4b8bc" stroke-width="1" rx="0" />
<text x="1009" y="97" font-size="5" fill="#333" text-anchor="end" font-weight="normal" >QI05111_I</text>
<rect x="953.5" y="98" width="52" height="6.5" fill="#fff" stroke="none" stroke-width="1" rx="0" />
<text transform="translate(989,103.8) scale(0.86,1)" font-size="8" fill="#222" text-anchor="end" font-weight="bold" >0.00</text>
<text x="989.5" y="103.5" font-size="4.5" fill="#999" text-anchor="start" font-weight="normal" >%</text>
<rect x="952.5" y="109.3" width="58.1" height="14.5" fill="#e3e9ef" stroke="#b4b8bc" stroke-width="1" rx="0" />
<text x="1009" y="115.3" font-size="5" fill="#333" text-anchor="end" font-weight="normal" >QI05604_A_I</text>
<rect x="953.5" y="116.3" width="52" height="6.5" fill="#fff" stroke="none" stroke-width="1" rx="0" />
<text transform="translate(989,122.1) scale(0.86,1)" font-size="8" fill="#222" text-anchor="end" font-weight="bold" >4.80</text>
<rect x="952.5" y="127" width="58.1" height="14.5" fill="#e3e9ef" stroke="#b4b8bc" stroke-width="1" rx="0" />
<text x="1009" y="133" font-size="5" fill="#333" text-anchor="end" font-weight="normal" >QI05604_B_I</text>
<rect x="953.5" y="134" width="52" height="6.5" fill="#fff" stroke="none" stroke-width="1" rx="0" />
<text transform="translate(989,139.8) scale(0.86,1)" font-size="8" fill="#222" text-anchor="end" font-weight="bold" >8.50</text>
<rect x="952.5" y="145.6" width="58.1" height="14.5" fill="#e3e9ef" stroke="#b4b8bc" stroke-width="1" rx="0" />
<text x="1009" y="151.6" font-size="5" fill="#333" text-anchor="end" font-weight="normal" >QI05604_C_I</text>
<rect x="953.5" y="152.6" width="52" height="6.5" fill="#fff" stroke="none" stroke-width="1" rx="0" />
<text transform="translate(989,158.4) scale(0.86,1)" font-size="8" fill="#222" text-anchor="end" font-weight="bold" >12.50</text>
<rect x="952.5" y="164.4" width="58.1" height="14.5" fill="#e3e9ef" stroke="#b4b8bc" stroke-width="1" rx="0" />
<text x="1009" y="170.4" font-size="5" fill="#333" text-anchor="end" font-weight="normal" >QI05604_D_I</text>
<rect x="953.5" y="171.4" width="52" height="6.5" fill="#fff" stroke="none" stroke-width="1" rx="0" />
<text transform="translate(989,177.20000000000002) scale(0.86,1)" font-size="8" fill="#222" text-anchor="end" font-weight="bold" >15.50</text>
<rect x="952.5" y="184.2" width="58.1" height="14.5" fill="#e3e9ef" stroke="#b4b8bc" stroke-width="1" rx="0" />
<text x="1009" y="190.2" font-size="5" fill="#333" text-anchor="end" font-weight="normal" >QI05604_E_I</text>
<rect x="953.5" y="191.2" width="52" height="6.5" fill="#fff" stroke="none" stroke-width="1" rx="0" />
<text transform="translate(989,197.0) scale(0.86,1)" font-size="8" fill="#222" text-anchor="end" font-weight="bold" >15.50</text>
<rect x="961.5" y="202.5" width="39.2" height="5" fill="#e3e9ef" stroke="#b4b8bc" stroke-width="1" rx="0" />
<text x="999.7" y="207" font-size="5" fill="#333" text-anchor="end" font-weight="normal" >...Sep_Install</text>
<rect x="969.5" y="209.2" width="5.5" height="5.5" fill="#8c8c8c" stroke="#7a7a7a" stroke-width="1" rx="0" />
<text x="972.25" y="214.0" font-size="5" fill="#f2f2f2" text-anchor="middle" font-weight="bold" >M</text>
<rect x="969" y="216" width="6.5" height="6.5" fill="#7a7a7a" stroke="none" stroke-width="1" rx="0" />
<rect x="981" y="216" width="6" height="5" fill="#aaa" stroke="none" stroke-width="1" rx="0" />
<rect x="977.5" y="223" width="5" height="4.5" fill="#ccc" stroke="#999" stroke-width="0.6" rx="0" />
<rect x="984.5" y="223" width="5" height="4.5" fill="#ccc" stroke="#999" stroke-width="0.6" rx="0" />
<rect x="216.5" y="224.6" width="6" height="6.5" fill="#ff1a1a" stroke="none" stroke-width="1" rx="0" />
<text x="219.5" y="229.9" font-size="5" fill="#fff" text-anchor="middle" font-weight="bold" >H</text>
<rect x="223.0" y="224.6" width="6" height="6.5" fill="#7a7a7a" stroke="none" stroke-width="1" rx="0" />
<text x="226.0" y="229.9" font-size="5" fill="#ddd" text-anchor="middle" font-weight="bold" >M</text>
<rect x="216.5" y="231.6" width="6" height="6.5" fill="#e8e8e8" stroke="none" stroke-width="1" rx="0" />
<text x="219.5" y="236.9" font-size="5" fill="#ff5050" text-anchor="middle" font-weight="bold" >F</text>
<rect x="223.0" y="231.6" width="6" height="6.5" fill="#7a7a7a" stroke="none" stroke-width="1" rx="0" />
<text x="226.0" y="236.9" font-size="5" fill="#ddd" text-anchor="middle" font-weight="bold" >I</text>
<rect x="230.6" y="218.5" width="56" height="28" fill="#e3e9ef" stroke="#b4b8bc" stroke-width="1" rx="0" />
<text x="285.1" y="223.8" font-size="5" fill="#333" text-anchor="end" font-weight="normal" >FIC05407_C</text>
<rect x="231.1" y="224.5" width="35.910000000000004" height="7" fill="#ff0000" stroke="none" stroke-width="1" rx="0" />
<text transform="translate(266.01,230.5) scale(0.86,1)" font-size="8" fill="#fff" text-anchor="end" font-weight="bold" >0.00</text>
<text transform="translate(266.01,237.5) scale(0.86,1)" font-size="8" fill="#2a2aff" text-anchor="end" font-weight="bold" >0.00</text>
<text transform="translate(266.01,244.5) scale(0.86,1)" font-size="8" fill="#f08070" text-anchor="end" font-weight="bold" >0.00</text>
<text x="267.01" y="233" font-size="4.5" fill="#999" text-anchor="start" font-weight="normal" >L/h</text>
<text x="267.01" y="244" font-size="4.5" fill="#999" text-anchor="start" font-weight="normal" >%</text>
<line x1="287" y1="233.7" x2="292.9" y2="233.7" stroke="#333" stroke-width="1" />
<circle cx="292.9" cy="233.7" r="1.6" fill="#000"/>
<polygon points="288.7,284.6 297.8,284.6 293.2,292.8 297.8,301 288.7,301 293.2,292.8" fill="#2f8a2f"/>
<rect x="277.7" y="282.6" width="5.5" height="5.5" fill="#8c8c8c" stroke="#7a7a7a" stroke-width="1" rx="0" />
<text x="280.45" y="287.40000000000003" font-size="5" fill="#f2f2f2" text-anchor="middle" font-weight="bold" >M</text>
<rect x="299.9" y="275.7" width="29" height="5.6" fill="#e3e9ef" stroke="#b4b8bc" stroke-width="1" rx="0" />
<text x="301.5" y="280.3" font-size="5" fill="#333" text-anchor="start" font-weight="normal" >YI</text>
<rect x="297.5" y="224.6" width="6" height="6.5" fill="#ffff00" stroke="none" stroke-width="1" rx="0" />
<text x="300.5" y="229.9" font-size="5" fill="#333" text-anchor="middle" font-weight="bold" >M</text>
<rect x="304" y="224.6" width="6" height="6.5" fill="#7a7a7a" stroke="none" stroke-width="1" rx="0" />
<text x="307" y="229.9" font-size="5" fill="#ddd" text-anchor="middle" font-weight="bold" >M</text>
<rect x="297.5" y="231.6" width="6" height="6.5" fill="#e8e8e8" stroke="none" stroke-width="1" rx="0" />
<text x="300.5" y="236.9" font-size="5" fill="#ff5050" text-anchor="middle" font-weight="bold" >F</text>
<rect x="304" y="231.6" width="6" height="6.5" fill="#7a7a7a" stroke="none" stroke-width="1" rx="0" />
<text x="307" y="236.9" font-size="5" fill="#ddd" text-anchor="middle" font-weight="bold" >I</text>
<rect x="311.3" y="218" width="10" height="28.5" fill="#e3e9ef" stroke="#b4b8bc" stroke-width="1" rx="0" />
<rect x="311.8" y="224.6" width="6" height="7" fill="#ffff00" stroke="none" stroke-width="1" rx="0" />
<circle cx="294.4" cy="397.4" r="8.4" fill="#6e6e6e"/>
<rect x="290.2" y="393.4" width="1.4" height="7.6" fill="#fff" stroke="none" stroke-width="1" rx="0" />
<rect x="297.4" y="393.4" width="1.4" height="7.6" fill="#fff" stroke="none" stroke-width="1" rx="0" />
<rect x="291.59999999999997" y="394.79999999999995" width="5.8" height="1.1" fill="#f4f4f4" stroke="none" stroke-width="1" rx="0" />
<rect x="291.59999999999997" y="396.2" width="5.8" height="2.6" fill="#1e1e1e" stroke="none" stroke-width="1" rx="0" />
<rect x="291.59999999999997" y="398.79999999999995" width="5.8" height="1.8" fill="#8a8a8a" stroke="none" stroke-width="1" rx="0" />
<rect x="278.5" y="386.9" width="5.5" height="5.5" fill="#8c8c8c" stroke="#7a7a7a" stroke-width="1" rx="0" />
<text x="281.25" y="391.7" font-size="5" fill="#f2f2f2" text-anchor="middle" font-weight="bold" >M</text>
<rect x="301.5" y="380" width="19" height="5.4" fill="#e3e9ef" stroke="#b4b8bc" stroke-width="1" rx="0" />
<text x="304.5" y="384.6" font-size="5" fill="#633" text-anchor="start" font-weight="bold" >D</text>
<rect x="303" y="386.4" width="6" height="6.5" fill="#7a7a7a" stroke="none" stroke-width="1" rx="0" />
<text x="306.0" y="391.7" font-size="5" fill="#ddd" text-anchor="middle" font-weight="bold" >I</text>
<rect x="304.7" y="393.6" width="15" height="6.6" fill="#fff" stroke="#c0c4c8" stroke-width="0.8" rx="0" />
<rect x="310.6" y="400" width="10" height="8" fill="#e3e9ef" stroke="#c0c4c8" stroke-width="0.8" rx="0" />
<path d="M304.2,404.5 v-1.2 a1.8,1.8 0 0 1 3.6,0 v1.2" fill="none" stroke="#777" stroke-width="1"/>
<rect x="303" y="404.5" width="6" height="4" fill="#777" stroke="none" stroke-width="1" rx="0" />
<circle cx="298.7" cy="431" r="1.6" fill="#000"/>
<line x1="298.7" y1="431" x2="298.7" y2="441" stroke="#555" stroke-width="1" />
<rect x="292.3" y="441.3" width="10.5" height="10.2" fill="#e6ebf0" stroke="none" stroke-width="1" rx="0" />
<text x="303.5" y="448" font-size="5" fill="#333" text-anchor="start" font-weight="normal" >LS054</text>
<rect x="317.5" y="209.5" width="161.5" height="299.5" rx="2.5" fill="#edf0f4" stroke="#86cdf2" stroke-width="1.5"/>
<path d="M317.5,223.7 V212 a2.5,2.5 0 0 1 2.5,-2.5 H476.5 a2.5,2.5 0 0 1 2.5,2.5 V223.7 Z" fill="#7cc8f0"/>
<text x="323" y="220" font-size="7.8" fill="#4a5a66" text-anchor="start" font-weight="normal" textLength="31" lengthAdjust="spacingAndGlyphs">TI05104_I</text>
<path d="M466,214.2 L472.6,220.5 M472.6,214.2 L466,220.5" stroke="#444" stroke-width="1"/>
<rect x="318.3" y="224.4" width="135.4" height="18.6" fill="#c4c4c4" stroke="none" stroke-width="1" rx="0" />
<text x="320" y="232" font-size="7.5" fill="#333" text-anchor="start" font-weight="normal" textLength="131.4" lengthAdjust="spacingAndGlyphs">Analog measurement monitoring - Large</text>
<rect x="454.4" y="224.4" width="10.8" height="18.6" fill="#d8d8d8" stroke="#bbb" stroke-width="0.6" rx="0" />
<path d="M457,233.5 l3.2,-3.2 v2 h1.5 a2.5,2.5 0 0 1 2.5,2.5 v2 a2.5,2.5 0 0 0 -2.5,-2.5 h-1.5 v2 z" fill="#3a8fc8"/>
<rect x="466.8" y="224.4" width="11.2" height="18.6" fill="#d8d8d8" stroke="#bbb" stroke-width="0.6" rx="0" />
<line x1="469" y1="233.8" x2="474" y2="233.8" stroke="#888" stroke-width="0.8" />
<circle cx="475.2" cy="233.8" r="1.3" fill="none" stroke="#888" stroke-width="0.8"/>
<rect x="318.3" y="243.9" width="160" height="18" fill="#e2e6ea" stroke="none" stroke-width="1" rx="0" />
<rect x="318.8" y="244.2" width="17.30000000000001" height="17.4" fill="#eef1f4" stroke="#d0d3d6" stroke-width="0.6" rx="0" />
<rect x="337.1" y="244.2" width="17.299999999999955" height="17.4" fill="#eef1f4" stroke="#d0d3d6" stroke-width="0.6" rx="0" />
<rect x="355.4" y="244.2" width="17.700000000000045" height="17.4" fill="#eef1f4" stroke="#d0d3d6" stroke-width="0.6" rx="0" />
<rect x="374.1" y="244.2" width="17.599999999999966" height="17.4" fill="#eef1f4" stroke="#d0d3d6" stroke-width="0.6" rx="0" />
<rect x="392.7" y="244.2" width="17.19999999999999" height="17.4" fill="#eef1f4" stroke="#d0d3d6" stroke-width="0.6" rx="0" />
<rect x="410.9" y="244.2" width="17.700000000000045" height="17.4" fill="#eef1f4" stroke="#d0d3d6" stroke-width="0.6" rx="0" />
<rect x="429.6" y="244.2" width="18.099999999999966" height="17.4" fill="#eef1f4" stroke="#d0d3d6" stroke-width="0.6" rx="0" />
<rect x="448.7" y="244.2" width="17.100000000000023" height="17.4" fill="#eef1f4" stroke="#d0d3d6" stroke-width="0.6" rx="0" />
<rect x="466.8" y="244.2" width="11.699999999999989" height="17.4" fill="#eef1f4" stroke="#d0d3d6" stroke-width="0.6" rx="0" />
<rect x="322.5" y="248.5" width="10" height="9" fill="none" stroke="#999" stroke-width="0.9" rx="0" />
<line x1="325.0" y1="248.5" x2="325.0" y2="257.5" stroke="#999" stroke-width="0.6" />
<line x1="327.5" y1="248.5" x2="327.5" y2="257.5" stroke="#999" stroke-width="0.6" />
<line x1="330.0" y1="248.5" x2="330.0" y2="257.5" stroke="#999" stroke-width="0.6" />
<line x1="322.5" y1="251.5" x2="332.5" y2="251.5" stroke="#999" stroke-width="0.6" />
<line x1="322.5" y1="254.5" x2="332.5" y2="254.5" stroke="#999" stroke-width="0.6" />
<rect x="341.5" y="248" width="3" height="10" fill="none" stroke="#888" stroke-width="0.9" rx="0" />
<line x1="347.5" y1="248" x2="347.5" y2="251" stroke="#888" stroke-width="0.8" />
<line x1="347.5" y1="255" x2="347.5" y2="258" stroke="#888" stroke-width="0.8" />
<path d="M359,257.5 h11 M359,257.5 v-9 M359,255 l3,-3 l2.5,2 l3,-3.5 l2.5,2" fill="none" stroke="#999" stroke-width="0.9"/>
<circle cx="382.5" cy="252.8" r="3.3" fill="none" stroke="#555" stroke-width="2.2"/>
<line x1="386.0" y1="252.8" x2="387.8" y2="252.8" stroke="#555" stroke-width="1.6"/>
<line x1="384.97487373415294" y1="255.27487373415292" x2="386.2476659402887" y2="256.5476659402887" stroke="#555" stroke-width="1.6"/>
<line x1="382.5" y1="256.3" x2="382.5" y2="258.1" stroke="#555" stroke-width="1.6"/>
<line x1="380.02512626584706" y1="255.27487373415292" x2="378.7523340597113" y2="256.5476659402887" stroke="#555" stroke-width="1.6"/>
<line x1="379.0" y1="252.8" x2="377.2" y2="252.8" stroke="#555" stroke-width="1.6"/>
<line x1="380.02512626584706" y1="250.3251262658471" x2="378.7523340597113" y2="249.0523340597113" stroke="#555" stroke-width="1.6"/>
<line x1="382.5" y1="249.3" x2="382.5" y2="247.5" stroke="#555" stroke-width="1.6"/>
<line x1="384.97487373415294" y1="250.3251262658471" x2="386.2476659402887" y2="249.0523340597113" stroke="#555" stroke-width="1.6"/>
<path d="M396.5,248 h6 M396.5,248 v9 h4 M398,250.5 h3 M398,252.5 h2" fill="none" stroke="#888" stroke-width="0.8"/>
<circle cx="403" cy="255" r="2.2" fill="none" stroke="#555" stroke-width="0.9"/><line x1="404.6" y1="256.6" x2="406.5" y2="258.5" stroke="#555" stroke-width="1"/>
<path d="M415,249 h6 v9 h-6 z" fill="none" stroke="#777" stroke-width="0.9"/><path d="M415,249 h3 l-3,3 z" fill="#3a8fc8"/>
<rect x="318.3" y="262.5" width="160" height="11.5" fill="#eef1f4" stroke="none" stroke-width="1" rx="0" />
<rect x="318.6" y="262.5" width="12.099999999999989" height="11.3" fill="#eef1f4" stroke="#d0d3d6" stroke-width="0.6" rx="0" />
<rect x="331.3" y="262.5" width="11.4" height="11.3" fill="#eef1f4" stroke="#d0d3d6" stroke-width="0.6" rx="0" />
<rect x="343.3" y="262.5" width="11.9" height="11.3" fill="#eef1f4" stroke="#d0d3d6" stroke-width="0.6" rx="0" />
<rect x="355.8" y="262.5" width="11.4" height="11.3" fill="#eef1f4" stroke="#d0d3d6" stroke-width="0.6" rx="0" />
<rect x="367.8" y="262.5" width="12.200000000000012" height="11.3" fill="#eef1f4" stroke="#d0d3d6" stroke-width="0.6" rx="0" />
<rect x="380.6" y="262.5" width="11.099999999999989" height="11.3" fill="#eef1f4" stroke="#d0d3d6" stroke-width="0.6" rx="0" />
<rect x="392.3" y="262.5" width="11.9" height="11.3" fill="#eef1f4" stroke="#d0d3d6" stroke-width="0.6" rx="0" />
<rect x="404.8" y="262.5" width="11.700000000000012" height="11.3" fill="#eef1f4" stroke="#d0d3d6" stroke-width="0.6" rx="0" />
<rect x="417.1" y="262.5" width="12.099999999999989" height="11.3" fill="#eef1f4" stroke="#d0d3d6" stroke-width="0.6" rx="0" />
<rect x="429.8" y="262.5" width="11.700000000000012" height="11.3" fill="#eef1f4" stroke="#d0d3d6" stroke-width="0.6" rx="0" />
<rect x="442.1" y="262.5" width="11.299999999999978" height="11.3" fill="#eef1f4" stroke="#d0d3d6" stroke-width="0.6" rx="0" />
<rect x="454.0" y="262.5" width="11.700000000000012" height="11.3" fill="#eef1f4" stroke="#d0d3d6" stroke-width="0.6" rx="0" />
<rect x="466.3" y="262.5" width="12.4" height="11.3" fill="#eef1f4" stroke="#d0d3d6" stroke-width="0.6" rx="0" />
<rect x="331" y="262.5" width="12" height="11.5" fill="#ff0000" stroke="none" stroke-width="1" rx="0" />
<text x="337" y="271.5" font-size="8.5" fill="#fff" text-anchor="middle" font-weight="bold" >H</text>
<rect x="343" y="262.5" width="12.5" height="11.5" fill="#ffff00" stroke="none" stroke-width="1" rx="0" />
<text x="349.2" y="271.8" font-size="9" fill="#222" text-anchor="middle" font-weight="bold" >M</text>
<path d="M381.8,271.2 h8.6 l-1.3,-1.8 v-2.6 a3,3.4 0 0 0 -6,0 v2.6 z M385.3,271.8 h1.6 v1.2 h-1.6z" fill="#666"/>
<line x1="318.3" y1="274.5" x2="479" y2="274.5" stroke="#b8b8b8" stroke-width="1" />
<text x="342.5" y="283.6" font-size="6" fill="#777" text-anchor="middle" font-weight="normal" >50.00</text>
<rect x="339.8" y="286.7" width="5.2" height="109.1" fill="#2f8a35" stroke="none" stroke-width="1" rx="0" />
<line x1="345" y1="286.7" x2="351" y2="286.7" stroke="#888" stroke-width="0.8" />
<line x1="345" y1="309.4" x2="348.5" y2="309.4" stroke="#888" stroke-width="0.8" />
<line x1="345" y1="331" x2="351" y2="331" stroke="#888" stroke-width="0.8" />
<line x1="345" y1="342" x2="348.5" y2="342" stroke="#888" stroke-width="0.8" />
<line x1="345" y1="353" x2="351" y2="353" stroke="#888" stroke-width="0.8" />
<line x1="345" y1="363.4" x2="348.5" y2="363.4" stroke="#888" stroke-width="0.8" />
<line x1="345" y1="374.4" x2="348.5" y2="374.4" stroke="#888" stroke-width="0.8" />
<line x1="345" y1="385.5" x2="348.5" y2="385.5" stroke="#888" stroke-width="0.8" />
<line x1="339.8" y1="395.8" x2="351" y2="395.8" stroke="#888" stroke-width="0.8" />
<polygon points="347,297.5 351,294.8 351,298.5" fill="#ff1010"/>
<polygon points="347,319.5 351,316.8 351,320.5" fill="#e8e800"/>
<text x="342.5" y="404.9" font-size="6" fill="#777" text-anchor="middle" font-weight="normal" >0.00</text>
<rect x="385" y="280" width="18.3" height="17.4" fill="#d6d8da" stroke="#b9bcbf" stroke-width="0.8" rx="0" />
<path d="M390.2,285.2 a5.3,5.3 0 1 0 7.8,0" fill="none" stroke="#3797c4" stroke-width="1.6"/><line x1="394.1" y1="282.5" x2="394.1" y2="289" stroke="#3797c4" stroke-width="1.6"/>
<line x1="368.3" y1="301.6" x2="473.5" y2="301.6" stroke="#888" stroke-width="1" />
<text x="368.3" y="318.5" font-size="9" fill="#333" text-anchor="start" font-weight="normal" >PV</text>
<rect x="385.3" y="308.9" width="46.5" height="13" fill="#eef1f4" stroke="#4c9e4c" stroke-width="1.2" rx="0" />
<text x="431" y="318.8" font-size="9" fill="#444" text-anchor="end" font-weight="normal" >52.23</text>
<text x="432.5" y="318.8" font-size="9" fill="#666" text-anchor="start" font-weight="normal" >°C</text>
<line x1="368.3" y1="325.5" x2="473.5" y2="325.5" stroke="#666" stroke-width="1.2" />
<rect x="385.3" y="330.9" width="46.5" height="13.4" fill="#eef1f4" stroke="#7b7b7b" stroke-width="1.3" rx="0" />
<text x="368.3" y="342.2" font-size="9" fill="#333" text-anchor="start" font-weight="normal" >G</text>
<line x1="368.3" y1="344.4" x2="385" y2="344.4" stroke="#777" stroke-width="0.9" />
<text x="431" y="341.09999999999997" font-size="9" fill="#444" text-anchor="end" font-weight="normal" >0.00</text>
<text x="432.5" y="341.09999999999997" font-size="9" fill="#666" text-anchor="start" font-weight="normal" >°C/s</text>
<rect x="385.3" y="350.3" width="46.5" height="13.4" fill="#eef1f4" stroke="#7b7b7b" stroke-width="1.3" rx="0" />
<text x="368.3" y="361.6" font-size="9" fill="#333" text-anchor="start" font-weight="normal" >G</text>
<line x1="368.3" y1="363.8" x2="385" y2="363.8" stroke="#777" stroke-width="0.9" />
<text x="431" y="360.5" font-size="9" fill="#444" text-anchor="end" font-weight="normal" >49.74</text>
<text x="432.5" y="360.5" font-size="9" fill="#666" text-anchor="start" font-weight="normal" >°C/s</text>
<path d="M380.5,354.3 l3,3 h-1.8 v4.5 h-2.4 v-4.5 h-1.8 z" fill="#222"/>
<rect x="385.3" y="369.7" width="46.5" height="13.4" fill="#eef1f4" stroke="#7b7b7b" stroke-width="1.3" rx="0" />
<text x="368.3" y="381.0" font-size="9" fill="#333" text-anchor="start" font-weight="normal" >G</text>
<line x1="368.3" y1="383.2" x2="385" y2="383.2" stroke="#777" stroke-width="0.9" />
<text x="431" y="379.9" font-size="9" fill="#444" text-anchor="end" font-weight="normal" >0.00</text>
<text x="432.5" y="379.9" font-size="9" fill="#666" text-anchor="start" font-weight="normal" >°C/s</text>
<path d="M380.5,381.2 l3,-3 h-1.8 v-4.5 h-2.4 v4.5 h-1.8 z" fill="#222"/>
<text x="368.3" y="389.4" font-size="5.5" fill="#666" text-anchor="start" font-weight="normal" >-5.00</text>
<text x="473.5" y="389.4" font-size="5.5" fill="#666" text-anchor="end" font-weight="normal" >5.00</text>
<rect x="368.5" y="391" width="105" height="5.3" fill="#f4f6f8" stroke="#c4c6c8" stroke-width="0.8" rx="0" />
<line x1="382" y1="396.3" x2="382" y2="399" stroke="#666" stroke-width="0.8" />
<line x1="395" y1="396.3" x2="395" y2="399" stroke="#666" stroke-width="0.8" />
<line x1="408" y1="396.3" x2="408" y2="399" stroke="#666" stroke-width="0.8" />
<line x1="421" y1="396.3" x2="421" y2="400.5" stroke="#666" stroke-width="0.8" />
<line x1="434" y1="396.3" x2="434" y2="399" stroke="#666" stroke-width="0.8" />
<line x1="447" y1="396.3" x2="447" y2="399" stroke="#666" stroke-width="0.8" />
<line x1="460" y1="396.3" x2="460" y2="399" stroke="#666" stroke-width="0.8" />
<defs><linearGradient id="rg" x1="0" y1="0" x2="0" y2="1"><stop offset="0" stop-color="#f4f4f4"/><stop offset="1" stop-color="#d8d8d8"/></linearGradient></defs>
<rect x="400.3" y="406.5" width="73.3" height="12.3" fill="url(#rg)" stroke="#b8b8b8" stroke-width="0.8" rx="0" />
<text x="437" y="415.5" font-size="8" fill="#222" text-anchor="middle" font-weight="normal" >Reset</text>
<line x1="323.1" y1="424.2" x2="473.8" y2="424.2" stroke="#999" stroke-width="0.9" />
<line x1="323.1" y1="464" x2="473.8" y2="464" stroke="#aaa" stroke-width="0.9" />
<rect x="323.3" y="471.3" width="73.5" height="13.3" fill="#eef1f4" stroke="#999" stroke-width="1" rx="0" />
<rect x="400.3" y="471.3" width="73.5" height="13.3" fill="#eef1f4" stroke="#999" stroke-width="1" rx="0" />
<!-- left tabs -->
<rect x="0" y="55" width="16" height="615" fill="#ececec"/>
<rect x="0" y="55" width="15.5" height="153" fill="#fff"/>
<line x1="15.5" y1="208" x2="15.5" y2="670" stroke="#d2d2d2" stroke-width="1"/>
<line x1="0" y1="208.5" x2="15.5" y2="208.5" stroke="#d2d2d2" stroke-width="1"/>
<line x1="0" y1="362.5" x2="15.5" y2="362.5" stroke="#d6d6d6" stroke-width="1"/>
<line x1="0" y1="517" x2="15.5" y2="517" stroke="#d6d6d6" stroke-width="1"/>
<g fill="none" stroke="#777" stroke-width="0.8">
<rect x="2.5" y="102.5" width="9" height="9"/><path d="M2.5,102.5 L11.5,111.5 M11.5,102.5 L2.5,111.5"/>
<rect x="2.5" y="256" width="9" height="9"/><path d="M2.5,256 L11.5,265 M11.5,256 L2.5,265"/>
<rect x="2.5" y="410.5" width="9" height="9"/><path d="M2.5,410.5 L11.5,419.5 M11.5,410.5 L2.5,419.5"/>
<rect x="2.5" y="563" width="9" height="9"/><path d="M2.5,563 L11.5,572 M11.5,563 L2.5,572"/>
</g>
<text transform="translate(11,169.5) rotate(-90)" font-size="9" fill="#555" textLength="68" lengthAdjust="spacingAndGlyphs">Process displays</text>
<text transform="translate(10.8,324) rotate(-90)" font-size="8.2" fill="#999">Equipment</text>
<text transform="translate(10.8,478.6) rotate(-90)" font-size="8.2" fill="#999">Hardware</text>
<text transform="translate(10.8,632) rotate(-90)" font-size="8.2" fill="#999">User selection</text>
<!-- nav panel -->
<rect x="15.5" y="55" width="199" height="615" fill="#fff"/>
<line x1="15.5" y1="55.5" x2="214" y2="55.5" stroke="#d0d4d8" stroke-width="1"/>
<rect x="16" y="56" width="25" height="18" fill="#e3e7eb"/>
<line x1="214" y1="55" x2="214" y2="74" stroke="#d0d4d8" stroke-width="1"/>
<line x1="15.5" y1="73.8" x2="214" y2="73.8" stroke="#d0d4d8" stroke-width="0.8"/>
<g fill="#2b8cbf"><rect x="24" y="61.3" width="1.5" height="1.3"/><rect x="24" y="64.3" width="1.5" height="1.3"/><rect x="24" y="67.3" width="1.5" height="1.3"/></g>
<g fill="#777"><rect x="26.5" y="61.3" width="7.5" height="1.3"/><rect x="26.5" y="64.3" width="7.5" height="1.3"/><rect x="26.5" y="67.3" width="7.5" height="1.3"/></g>
<rect x="207" y="74" width="7.5" height="596" fill="#e9eef3"/>
<line x1="207" y1="74" x2="207" y2="670" stroke="#d5d9dd" stroke-width="0.8"/>
<polygon points="209.5,353.5 213,357 209.5,360.5" fill="#4d6272"/>
<polygon points="212.5,369.5 209,373 212.5,376.5" fill="#4d6272"/>
<rect x="16" y="74.2" width="191" height="14.5" fill="#1454c0"/>
<rect x="16" y="104.6" width="191" height="14.7" fill="#eaeef2"/>
<rect x="16" y="135.2" width="191" height="14.7" fill="#eaeef2"/>
<rect x="17" y="75.4" width="10.8" height="12" fill="#c8c8c8"/><rect x="29.6" y="75.4" width="10.8" height="12" fill="#c8c8c8"/><rect x="42.6" y="75.4" width="10.8" height="12" fill="#ffff00"/><rect x="56" y="75.4" width="10.8" height="12" fill="#c8c8c8"/><rect x="69" y="75.4" width="10.8" height="12" fill="#c8c8c8"/><text x="35.0" y="85.2" font-size="9.5" fill="#9a9a9a" text-anchor="middle">H</text><text x="48.0" y="85.2" font-size="9.5" fill="#333" text-anchor="middle">M</text><rect x="17" y="90.7" width="10.8" height="12" fill="#c8c8c8"/><rect x="29.6" y="90.7" width="10.8" height="12" fill="#ff0000"/><rect x="42.6" y="90.7" width="10.8" height="12" fill="#ffff00"/><rect x="56" y="90.7" width="10.8" height="12" fill="#c8c8c8"/><rect x="69" y="90.7" width="10.8" height="12" fill="#c8c8c8"/><text x="35.0" y="100.5" font-size="9.5" fill="#fff" text-anchor="middle">H</text><text x="48.0" y="100.5" font-size="9.5" fill="#333" text-anchor="middle">M</text><rect x="17" y="106.0" width="10.8" height="12" fill="#c8c8c8"/><rect x="29.6" y="106.0" width="10.8" height="12" fill="#ff0000"/><rect x="42.6" y="106.0" width="10.8" height="12" fill="#ffff00"/><rect x="56" y="106.0" width="10.8" height="12" fill="#c8c8c8"/><rect x="69" y="106.0" width="10.8" height="12" fill="#c8c8c8"/><text x="35.0" y="115.8" font-size="9.5" fill="#fff" text-anchor="middle">H</text><text x="48.0" y="115.8" font-size="9.5" fill="#333" text-anchor="middle">M</text><rect x="17" y="121.3" width="10.8" height="12" fill="#c8c8c8"/><rect x="29.6" y="121.3" width="10.8" height="12" fill="#c8c8c8"/><rect x="42.6" y="121.3" width="10.8" height="12" fill="#ffff00"/><rect x="56" y="121.3" width="10.8" height="12" fill="#c8c8c8"/><rect x="69" y="121.3" width="10.8" height="12" fill="#c8c8c8"/><text x="35.0" y="131.1" font-size="9.5" fill="#9a9a9a" text-anchor="middle">H</text><text x="48.0" y="131.1" font-size="9.5" fill="#333" text-anchor="middle">M</text><rect x="17" y="136.6" width="10.8" height="12" fill="#c8c8c8"/><rect x="29.6" y="136.6" width="10.8" height="12" fill="#ff0000"/><rect x="42.6" y="136.6" width="10.8" height="12" fill="#ffff00"/><rect x="56" y="136.6" width="10.8" height="12" fill="#c8c8c8"/><rect x="69" y="136.6" width="10.8" height="12" fill="#c8c8c8"/><text x="35.0" y="146.4" font-size="9.5" fill="#fff" text-anchor="middle">H</text><text x="48.0" y="146.4" font-size="9.5" fill="#333" text-anchor="middle">M</text><rect x="17" y="151.89999999999998" width="10.8" height="12" fill="#c8c8c8"/><rect x="29.6" y="151.89999999999998" width="10.8" height="12" fill="#c8c8c8"/><rect x="42.6" y="151.89999999999998" width="10.8" height="12" fill="#c8c8c8"/><rect x="56" y="151.89999999999998" width="10.8" height="12" fill="#c8c8c8"/><rect x="69" y="151.89999999999998" width="10.8" height="12" fill="#c8c8c8"/><polygon points="83.2,79 90.7,79 87,84.6" fill="none" stroke="#fff" stroke-width="0.9"/>
<g fill="none" stroke-width="1.1">
<rect x="97.6" y="76.6" width="8.2" height="7.5" stroke="#fff"/><line x1="97" y1="85.3" x2="106.3" y2="85.3" stroke="#fff"/>
<rect x="114.6" y="92.1" width="8.2" height="7.5" stroke="#555"/><line x1="114" y1="100.6" x2="123.3" y2="100.6" stroke="#555"/>
<rect x="114.6" y="107.4" width="8.2" height="7.5" stroke="#555"/><line x1="114" y1="115.9" x2="123.3" y2="115.9" stroke="#555"/>
<rect x="114.6" y="122.7" width="8.2" height="7.5" stroke="#555"/><line x1="114" y1="131.2" x2="123.3" y2="131.2" stroke="#555"/>
<rect x="114.6" y="138" width="8.2" height="7.5" stroke="#555"/><line x1="114" y1="146.5" x2="123.3" y2="146.5" stroke="#555"/>
<rect x="97.6" y="153.3" width="8.2" height="7.5" stroke="#555"/><line x1="97" y1="161.8" x2="106.3" y2="161.8" stroke="#555"/>
</g>
<text x="109.6" y="85" font-size="8.6" fill="#fff">Separation</text>
<text x="126.5" y="100" font-size="8.6" fill="#333">OilLoop</text>
<text x="126.5" y="115.2" font-size="8.6" fill="#333">Tank</text>
<text x="126.5" y="130.4" font-size="8.6" fill="#333">WaterLoop</text>
<text x="126.5" y="146" font-size="8.6" fill="#333">DemoDisplay</text>
<text x="109.6" y="161" font-size="8.6" fill="#333">Overview</text>
<!-- header -->
<rect x="0" y="0" width="1071" height="19" fill="#506170"/>
<rect x="0" y="0" width="1071" height="1" fill="#3a4650"/>
<text x="16" y="12.9" font-size="8.6" fill="#fff">DCS +</text>
<text x="831.6" y="12.9" font-size="8.6" fill="#fff">Monitoring &amp; control</text>
<text x="949" y="12.9" font-size="8.6" fill="#fff">admin</text>
<text x="1034" y="16" font-size="17" fill="#fff" font-weight="bold">?</text>
<!-- toolbar -->
<rect x="0" y="19" width="1071" height="36" fill="#eaeff3"/>
<g id="tbtns">
<rect x="5" y="24" width="26" height="25" fill="#cbcbcb"/>
<rect x="36.5" y="24" width="26" height="25" fill="#cbcbcb"/>
<rect x="68" y="24" width="26.5" height="25" fill="#cbcbcb"/>
<rect x="100" y="24" width="26" height="25" fill="#cbcbcb"/>
<rect x="132" y="24" width="26" height="25" fill="#cbcbcb"/>
<rect x="177" y="24" width="26" height="25" fill="#ff2020"/>
<rect x="209" y="24" width="26" height="25" fill="#cbcbcb"/>
<rect x="241" y="24" width="26" height="25" fill="#cbcbcb"/>
<rect x="866.5" y="24" width="26.5" height="25" fill="#cbcbcb"/>
<rect x="898.5" y="24" width="26" height="25" fill="#cbcbcb"/>
<rect x="930" y="24" width="26" height="25" fill="#cbcbcb"/>
<rect x="962" y="24" width="26" height="25" fill="#cbcbcb"/>
<rect x="1007" y="24" width="26" height="25" fill="#ff22ff"/>
<rect x="1052" y="24" width="19" height="25" fill="#cbcbcb"/>
</g>
<!-- alarm lines -->
<rect x="286" y="23.7" width="562" height="25.8" fill="#f4f6f8"/>
<rect x="300" y="24.2" width="521" height="11.8" fill="#b9b9b9"/>
<rect x="300" y="37" width="521" height="11.6" fill="#ff0000"/>
<!-- toolbar content -->
<text x="38.8" y="34" font-size="8" fill="#8a8a8a">H</text>
<text x="59.5" y="40" font-size="5.5" fill="#3c6a3c" text-anchor="end" font-weight="bold">1</text>
<text x="60.5" y="46" font-size="5.5" fill="#555" text-anchor="end" font-weight="bold">6</text>
<rect x="36.5" y="46" width="26" height="3" fill="#b6b6b6"/>
<text x="70.3" y="34" font-size="8" fill="#8a8a8a">M</text>
<text x="92" y="46" font-size="5.5" fill="#444" text-anchor="end" font-weight="bold">7</text>
<rect x="68" y="46" width="26.5" height="3.4" fill="#ffff00"/>
<text x="869" y="34" font-size="8" fill="#8a8a8a">F</text>
<text x="891" y="40" font-size="5.5" fill="#444" text-anchor="end" font-weight="bold">2</text>
<text x="891" y="46" font-size="5.5" fill="#555" text-anchor="end" font-weight="bold">5</text>
<rect x="866.5" y="46" width="26.5" height="3" fill="#b6b6b6"/>
<!-- red bell button -->
<path d="M181.5,34.5 h5.5 l-0.8,-1 v-2.5 a2,2 0 0 0 -4,0 v2.5 z" fill="#fff"/>
<path d="M182.2,28.3 a2.5,1.6 0 0 1 4.2,0" fill="none" stroke="#fff" stroke-width="0.8"/>
<circle cx="184.2" cy="35.3" r="0.9" fill="#fff"/>
<text x="199.5" y="47.5" font-size="6.5" fill="#fff" text-anchor="end">13</text>
<!-- gray button with icon -->
<rect x="210.9" y="26.7" width="9.9" height="9" fill="#777"/>
<path d="M212.5,34.5 l6,-6 M212.5,34.5 h6.5" stroke="#ddd" stroke-width="0.8"/>
<text x="229.5" y="47.5" font-size="6.5" fill="#eee" text-anchor="end">0</text>
<!-- mute -->
<path d="M244.5,34 h3.2 l6.6,-4 v14.6 l-6.6,-4 h-3.2 z" fill="#777"/>
<path d="M256,33.6 l8,8 M264,33.6 l-8,8" stroke="#3a9ac0" stroke-width="1.5"/>
<!-- alarm lines detail -->
<g fill="#2f8fc4"><path d="M289,30 h4 v-1.5 l2.5,2.3 l-2.5,2.3 v-1.5 h-4 z"/><path d="M289,42.5 h4 v-1.5 l2.5,2.3 l-2.5,2.3 v-1.5 h-4 z"/></g>
<g fill="#666"><path d="M296,34.5 v-5 a1.6,1.6 0 0 1 3.2,0 v5 z"/><path d="M296,47 v-5 a1.6,1.6 0 0 1 3.2,0 v5 z"/></g>
<line x1="413.3" y1="24" x2="413.3" y2="48.6" stroke="#e8e8e8" stroke-width="0.8"/>
<line x1="504.3" y1="24" x2="504.3" y2="48.6" stroke="#e8e8e8" stroke-width="0.8"/>
<text x="302.9" y="33.5" font-size="8" fill="#9a9a9a">2019-02-15 15:23:16.544</text>
<text x="418" y="33.5" font-size="8" fill="#9a9a9a">I</text>
<text x="508.3" y="33.5" font-size="8" fill="#9a9a9a">Limit value (high) for the negative gradient violated @22%.2f@</text>
<text x="302.9" y="45.7" font-size="8" fill="#fff">2019-02-15 15:16:35.115</text>
<text x="418" y="45.7" font-size="8" fill="#fff">C</text>
<text x="508.3" y="45.7" font-size="8" fill="#fff">PV - Low alarm limit violated 0.00</text>
<rect x="822.1" y="24.9" width="11.8" height="11" fill="#2e8b2e"/>
<path d="M824.8,27 v4 M824.8,32.5 v1.2 M826.5,30.5 h4 M829,28.5 l2.2,2 l-2.2,2" stroke="#fff" stroke-width="1.2" fill="none"/>
<rect x="822.1" y="37" width="11.8" height="11.6" fill="#ff3b3b"/>
<circle cx="828" cy="39.5" r="1.3" fill="#fff"/><path d="M827.3,40.5 v3 h-3 v1.8 h7.4 v-1.8 h-3 v-3 z M824.3,46.2 h7.4 v1 h-7.4z" fill="#fff"/>
<g>
<path d="M836.5,35 h7 l-1,-1.3 v-3 a2.5,2.5 0 0 0 -5,0 v3 z" fill="#666"/>
<path d="M839.5,31.5 l2,2 l4,-4.2" fill="none" stroke="#2a9a2a" stroke-width="1.2"/>
<path d="M836.5,47.5 h7 l-1,-1.3 v-3 a2.5,2.5 0 0 0 -5,0 v3 z" fill="#666"/>
<path d="M839.5,44 l2,2 l4,-4.2" fill="none" stroke="#2a9a2a" stroke-width="1.2"/>
</g>
<!-- magenta button -->
<rect x="1010.5" y="27.5" width="7.5" height="7.5" fill="#ff3030"/>
<path d="M1012.2,33.5 h4.2 l-0.6,-0.8 v-2 a1.5,1.5 0 0 0 -3,0 v2 z" fill="#fff"/>
<text x="1030" y="47.5" font-size="6.5" fill="#fff" text-anchor="end">5</text>
<!-- header icons -->
<g fill="none" stroke="#fff" stroke-width="0.9">
<rect x="912.7" y="2.5" width="6" height="4.5"/><rect x="920.5" y="2.5" width="6" height="4.5"/>
<path d="M915.7,7 v2 M923.5,7 v2"/>
</g>
<circle cx="920" cy="10.8" r="2.3" fill="#fff"/>
<path d="M915.5,17 a4.5,3.5 0 0 1 9,0 z" fill="#fff"/>
<polygon points="928.4,8.5 934.7,8.5 931.5,12.5" fill="#fff"/>
<circle cx="990" cy="6.3" r="3.8" fill="#fff"/>
<path d="M982.4,16 a7.6,5.8 0 0 1 15.2,0 z" fill="#fff"/>
<polygon points="997.6,8.5 1004.1,8.5 1000.8,12.5" fill="#fff"/>
<rect x="0" y="669" width="1071" height="1" fill="#c8ccd0"/>
<rect x="207" y="668.6" width="7" height="1.4" fill="#7d8b96"/>
<rect x="214.2" y="634" width="0.9" height="8.5" fill="#b8bcc0"/>
</svg>
</body></html>
